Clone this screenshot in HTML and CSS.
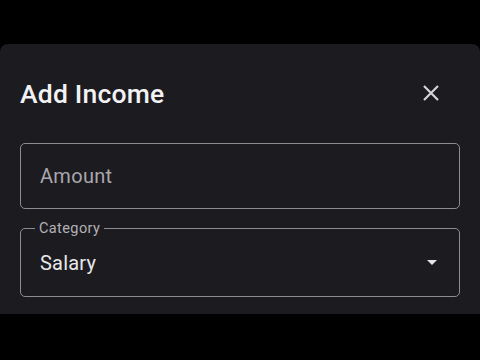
FILE: index.html
```html
<!DOCTYPE html>
<html lang="en">
<head>
    <meta charset="UTF-8">
    <meta name="viewport" content="width=device-width, initial-scale=1.0">
    <title>Add Income</title>
    <link rel="stylesheet" href="styles.css">
</head>
<body>

    <div class="sheet">
        <div class="sheet-head">
            <h1>Add Income</h1>
            <button class="close" aria-label="Close">
                <svg width="16" height="16" viewBox="0 0 16 16">
                    <path d="M1 1 L15 15 M15 1 L1 15" stroke="#d4d4d6" stroke-width="2.2" fill="none"/>
                </svg>
            </button>
        </div>

        <div class="field">
            <input type="text" placeholder="Amount">
        </div>

        <fieldset class="field select">
            <legend>Category</legend>
            <span class="value">Salary</span>
            <svg class="arrow" width="10" height="5" viewBox="0 0 10 5">
                <path d="M0 0 L10 0 L5 5 Z" fill="#e4e4e6"/>
            </svg>
        </fieldset>
    </div>

</body>
</html>
```

FILE: styles.css
```css
body { margin: 0; padding: 0; background: #000; font-family: Roboto, "Liberation Sans", sans-serif; overflow: hidden; }

.sheet {
    margin-top: 44px;
    height: 270px;
    box-sizing: border-box;
    background: #1c1b20;
    border-radius: 8px 8px 0 0;
    padding: 24px 20px 0 20px;
}

.sheet-head { display: flex; align-items: center; justify-content: space-between; height: 50px; margin-bottom: 25px; }
.sheet-head h1 { margin: 0; font-size: 26.5px; font-weight: 500; color: #f2f2f4; letter-spacing: 0.2px; }

.close { border: none; background: none; padding: 0; margin-right: 21px; display: flex; }

.field {
    box-sizing: border-box;
    height: 66px;
    border: 1.5px solid #8d8c92;
    border-radius: 5px;
    margin: 0 0 20px 0;
    display: flex;
    align-items: center;
}

.field input {
    flex: 1;
    border: none;
    background: none;
    outline: none;
    font-family: inherit;
    font-size: 20px;
    color: #e6e6e8;
    padding: 0 0 0 19px;
    letter-spacing: 0.3px;
}
.field input::placeholder { color: #a9a8ad; }

.select { padding: 0 22px 0 19px; min-width: 0; height: 77px; margin-top: -9px; }
.select legend {
    font-size: 14.5px;
    color: #b3b2b7;
    padding: 0 4px;
    margin-left: -5px;
    letter-spacing: 0.4px;
}
.select .value { flex: 1; font-size: 20px; color: #e8e8ea; letter-spacing: 0.2px; margin-top: -8px; }
.select .arrow { margin-top: -8px; }
```
